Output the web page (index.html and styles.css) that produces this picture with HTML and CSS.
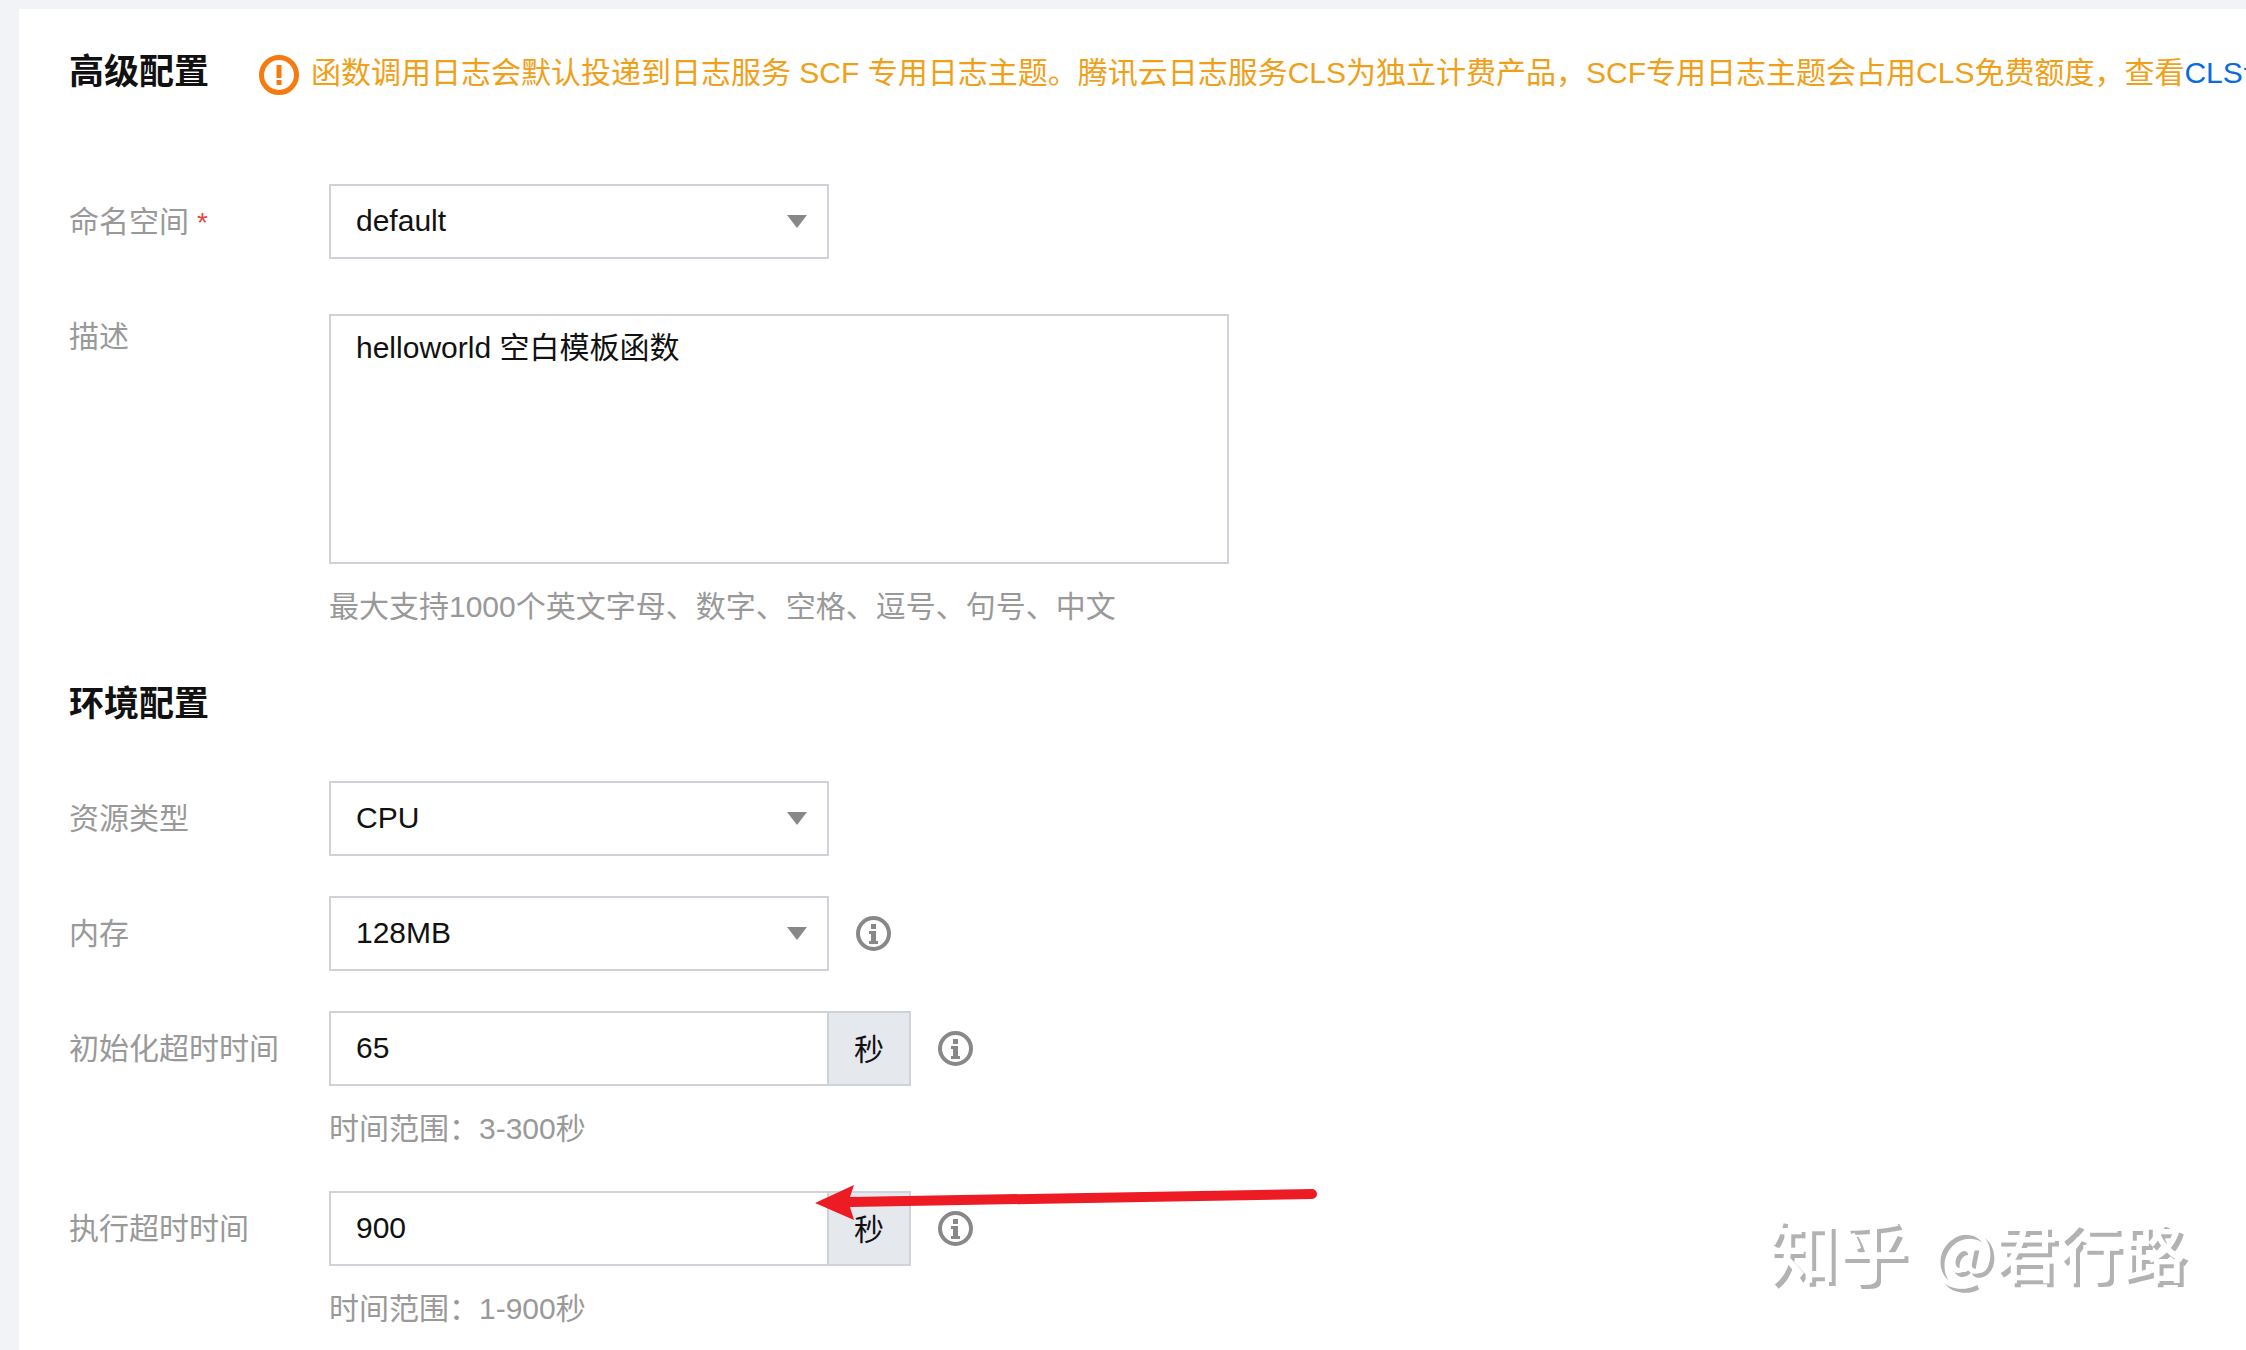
FILE: index.html
```
<!DOCTYPE html>
<html lang="zh-CN">
<head>
  <meta charset="UTF-8" />
  <meta name="viewport" content="width=device-width, initial-scale=1.0" />
  <title>高级配置</title>
  <link rel="stylesheet" href="styles.css">
</head>
<body>
  <form class="panel">
    <div class="section-head">
      <h2>高级配置</h2>
      <svg class="warn-icon" viewBox="0 0 40 40" aria-hidden="true">
        <circle cx="20" cy="20" r="17.5" fill="none" stroke="#f67a0f" stroke-width="5" />
        <path d="M17.5 10h5v13h-5zM17.5 25h5v5h-5z" fill="#f67a0f" />
      </svg>
      <p class="warn-text">函数调用日志会默认投递到日志服务 SCF 专用日志主题。腾讯云日志服务CLS为独立计费产品，SCF专用日志主题会占用CLS免费额度，查看<a href="#">CLS计费详情</a></p>
    </div>

    <div class="row row-wide">
      <label for="namespace">命名空间<span class="required">*</span></label>
      <div class="control">
        <div class="select">
          <select id="namespace">
            <option>default</option>
          </select>
        </div>
      </div>
    </div>

    <div class="row row-text">
      <label for="description">描述</label>
      <div class="control">
        <textarea id="description">helloworld 空白模板函数</textarea>
        <p class="hint">最大支持1000个英文字母、数字、空格、逗号、句号、中文</p>
      </div>
    </div>

    <h2 class="section-title">环境配置</h2>

    <div class="row">
      <label for="resource">资源类型</label>
      <div class="control">
        <div class="select">
          <select id="resource">
            <option>CPU</option>
          </select>
        </div>
      </div>
    </div>

    <div class="row">
      <label for="memory">内存</label>
      <div class="control">
        <div class="line">
          <div class="select">
            <select id="memory">
              <option>128MB</option>
            </select>
          </div>
          <svg class="info-icon" viewBox="0 0 35 35" aria-hidden="true">
            <circle cx="17.5" cy="17.5" r="15.5" />
            <path d="M15 8h5v5h-5zM13 15h7v10h2v3h-9v-3h2v-7h-2z" />
          </svg>
        </div>
      </div>
    </div>

    <div class="row">
      <label for="initTimeout">初始化超时时间</label>
      <div class="control">
        <div class="line">
          <div class="input-group">
            <input type="text" id="initTimeout" value="65" />
            <span class="unit">秒</span>
          </div>
          <svg class="info-icon" viewBox="0 0 35 35" aria-hidden="true">
            <circle cx="17.5" cy="17.5" r="15.5" />
            <path d="M15 8h5v5h-5zM13 15h7v10h2v3h-9v-3h2v-7h-2z" />
          </svg>
        </div>
        <p class="hint">时间范围：3-300秒</p>
      </div>
    </div>

    <div class="row">
      <label for="runTimeout">执行超时时间</label>
      <div class="control">
        <div class="line">
          <div class="input-group">
            <input type="text" id="runTimeout" value="900" />
            <span class="unit">秒</span>
          </div>
          <svg class="info-icon" viewBox="0 0 35 35" aria-hidden="true">
            <circle cx="17.5" cy="17.5" r="15.5" />
            <path d="M15 8h5v5h-5zM13 15h7v10h2v3h-9v-3h2v-7h-2z" />
          </svg>
          <svg class="arrow" viewBox="0 0 504 36" aria-hidden="true">
            <path d="M0 18L39 0L35 12L497 4A5 5 0 0 1 497 14L35 22L39 35Z" fill="#ed1c24" />
          </svg>
        </div>
        <p class="hint">时间范围：1-900秒</p>
      </div>
    </div>
  </form>

  <div class="watermark"><span class="brand">知乎</span><span>@君行路</span></div>
</body>
</html>
```

FILE: styles.css
```
* {
  box-sizing: border-box;
}
body {
  margin: 0;
  padding: 9px 0 0 19px;
  min-height: 100vh;
  display: flex;
  background-color: #f2f3f7;
  color: #111;
  font-family: "Liberation Sans", "Noto Sans CJK SC", sans-serif;
  font-size: 30px;
  line-height: 45px;
  overflow: hidden;
}
.panel {
  flex: 1;
  min-width: 0;
  padding: 38px 0 0 50px;
  background-color: #fff;
  overflow: hidden;
}
h2, p {
  margin: 0;
}
h2 {
  font-size: 35px;
  line-height: 50px;
  font-weight: bold;
}
.section-head {
  display: flex;
  align-items: center;
  margin-bottom: 87px;
  white-space: nowrap;
}
.warn-icon {
  flex: none;
  width: 40px;
  height: 40px;
  margin: 6px 12px 0 50px;
}
.warn-text {
  color: #f0a018;
}
.warn-text a {
  color: #0a6be0;
  text-decoration: none;
}
.section-title {
  margin: 50px 0 52px;
}
.row {
  display: flex;
  align-items: flex-start;
  margin-bottom: 40px;
}
.row-wide {
  margin-bottom: 55px;
}
.row label {
  flex: none;
  width: 260px;
  line-height: 75px;
  color: #999;
}
.row-text label {
  line-height: 45px;
}
.required {
  margin-left: 8px;
  font-size: 28px;
  line-height: 1;
  color: #e54545;
}
.control {
  flex: 1;
  min-width: 0;
}
.line {
  position: relative;
  display: flex;
  align-items: center;
  gap: 27px;
}
select, input, textarea {
  display: block;
  width: 500px;
  height: 75px;
  padding: 0 25px 2px;
  border: 2px solid #cfd3d9;
  border-radius: 0;
  background-color: #fff;
  color: #111;
  font: inherit;
  appearance: none;
  outline: none;
}
textarea {
  width: 900px;
  height: 250px;
  padding: 9px 25px;
  resize: none;
}
.select {
  position: relative;
  width: 500px;
}
.select::after {
  content: "";
  position: absolute;
  top: 31px;
  right: 22px;
  border: 10px solid transparent;
  border-top: 13px solid #888;
  border-bottom: 0;
  pointer-events: none;
}
.input-group {
  display: flex;
}
.unit {
  width: 84px;
  height: 75px;
  margin-left: -2px;
  border: 2px solid #cfd3d9;
  background-color: #e5e8ed;
  line-height: 73px;
  text-align: center;
}
.info-icon {
  flex: none;
  width: 35px;
  height: 35px;
  fill: #888;
}
.info-icon circle {
  fill: none;
  stroke: #888;
  stroke-width: 4;
}
.hint {
  margin-top: 20px;
  color: #999;
}
.arrow {
  position: absolute;
  top: -6px;
  left: 486px;
  width: 504px;
  height: 36px;
}
.watermark {
  position: absolute;
  right: 60px;
  bottom: 56px;
  display: flex;
  align-items: center;
  gap: 24px;
  color: #fff;
  font-family: "Noto Sans CJK SC", sans-serif;
  font-size: 64px;
  font-weight: 500;
  line-height: 90px;
  text-shadow: 4px 4px 0 #b2b2b2;
  white-space: nowrap;
}
.brand {
  font-size: 70px;
}
```
